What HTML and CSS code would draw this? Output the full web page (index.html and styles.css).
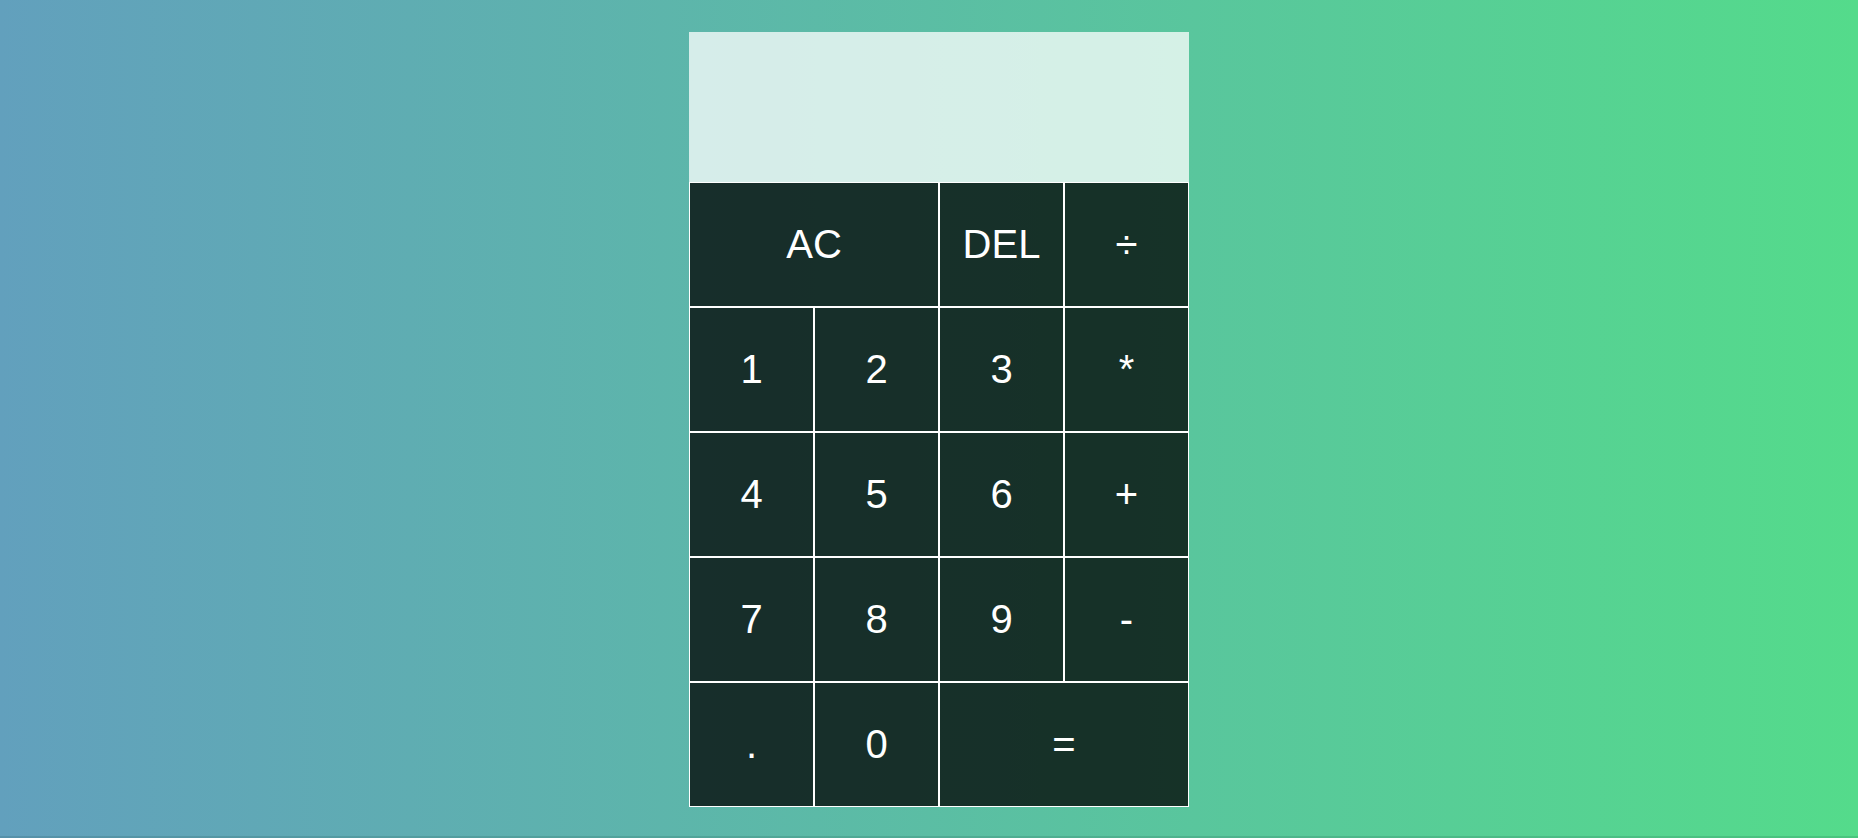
FILE: index.html
```html
<!DOCTYPE html>
<html lang="en">
<head>
<meta charset="utf-8">
<title>Calculator</title>
<link rel="stylesheet" href="styles.css">
</head>
<body>
<div class="page">
  <div class="calculator-grid">
    <div class="output">
      <div class="previous-operand"></div>
      <div class="current-operand"></div>
    </div>
    <button class="span-two">AC</button>
    <button>DEL</button>
    <button>÷</button>
    <button>1</button>
    <button>2</button>
    <button>3</button>
    <button>*</button>
    <button>4</button>
    <button>5</button>
    <button>6</button>
    <button>+</button>
    <button>7</button>
    <button>8</button>
    <button>9</button>
    <button>-</button>
    <button>.</button>
    <button>0</button>
    <button class="span-two">=</button>
  </div>
</div>
</body>
</html>
```

FILE: styles.css
```css
*, *::before, *::after {
  box-sizing: border-box;
  font-family: "Liberation Sans", Arial, sans-serif;
  font-weight: normal;
}

html, body {
  margin: 0;
  padding: 0;
}

body {
  min-height: 100vh;
  background: linear-gradient(to right, #62a0bd, #54db8b);
  box-shadow: inset 0 -2px 0 rgba(0, 40, 30, 0.12);
}

.page {
  padding: 32px 0 0 20px;
}

.calculator-grid {
  display: grid;
  justify-content: center;
  grid-template-columns: repeat(4, 125px);
  grid-template-rows: 150px repeat(5, 125px);
}

.calculator-grid > button {
  cursor: pointer;
  font-size: 40px;
  border: 1px solid #ffffff;
  outline: none;
  padding: 0;
  margin: 0;
  color: #ffffff;
  background-color: rgba(0, 0, 0, 0.75);
}

.span-two {
  grid-column: span 2;
}

.output {
  grid-column: 1 / -1;
  background-color: rgba(255, 255, 255, 0.75);
  display: flex;
  align-items: flex-end;
  justify-content: space-around;
  flex-direction: column;
  padding: 10px;
  word-wrap: break-word;
  word-break: break-all;
}

.previous-operand {
  color: rgba(255, 255, 255, 0.75);
  font-size: 24px;
}

.current-operand {
  color: #ffffff;
  font-size: 40px;
}
```
